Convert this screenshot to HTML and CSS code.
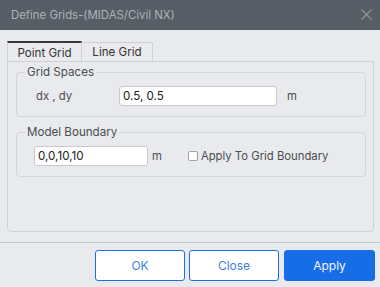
FILE: index.html
```html
<!DOCTYPE html>
<html lang="en">

<head>
    <meta charset="UTF-8">
    <title>Define Grids</title>
    <link rel="stylesheet" href="styles.css">
</head>

<body>
    <div class="dialog">
        <div class="titlebar">
            <span class="title">Define Grids-(MIDAS/Civil NX)</span>
            <svg class="close" width="11" height="11" viewBox="0 0 11 11">
                <path d="M0.5 0.5 L10.5 10.5 M10.5 0.5 L0.5 10.5" stroke="#8d9298" stroke-width="1.2" fill="none" />
            </svg>
        </div>

        <div class="content">
            <div class="tabs">
                <div class="tab active">Point Grid</div>
                <div class="tab">Line Grid</div>
            </div>

            <div class="panel">
                <fieldset class="group">
                    <legend>Grid Spaces</legend>
                    <div class="row row-spaces">
                        <span class="label">dx , dy</span>
                        <input class="field field-wide" type="text" value="0.5, 0.5">
                        <span class="unit">m</span>
                    </div>
                </fieldset>

                <fieldset class="group">
                    <legend>Model Boundary</legend>
                    <div class="row row-boundary">
                        <input class="field field-short" type="text" value="0,0,10,10">
                        <span class="unit unit-near">m</span>
                        <label class="check">
                            <span class="box"></span>
                            <span>Apply To Grid Boundary</span>
                        </label>
                    </div>
                </fieldset>
            </div>
        </div>

        <div class="footer">
            <button class="btn btn-outline">OK</button>
            <button class="btn btn-outline">Close</button>
            <button class="btn btn-primary">Apply</button>
        </div>
    </div>
</body>

</html>
```

FILE: styles.css
```css
* {
    box-sizing: border-box;
}

body {
    margin: 0;
    background-color: #e9eaed;
    font-family: Inter, "Noto Sans", sans-serif;
    font-size: 11.3px;
    color: #4a4d52;
}

.dialog {
    width: 380px;
    height: 287px;
    display: flex;
    flex-direction: column;
}

.titlebar {
    height: 30px;
    flex: none;
    display: flex;
    align-items: center;
    justify-content: space-between;
    background-color: #575e66;
    padding: 0 8px 0 11px;
}

.title {
    color: #aeb2b7;
    font-size: 11.4px;
}

.close {
    display: block;
    margin-top: -1px;
}

.content {
    padding: 11px 6px 0 7px;
}

.tabs {
    display: flex;
    height: 20px;
}

.tab {
    height: 20px;
    padding: 0;
    display: flex;
    align-items: center;
    justify-content: center;
    color: #333;
    font-size: 11.6px;
    border: 1px solid #cfd1d5;
    border-bottom: none;
}

.tab.active {
    width: 75px;
    border-top: 2px solid #3a3a3a;
    padding-top: 2px;
}

.tab:not(.active) {
    width: 71px;
    margin-top: 1px;
    height: 19px;
    border-left: none;
}

.panel {
    height: 171px;
    border: 1px solid #cfd1d5;
    border-radius: 0 0 4px 4px;
    padding: 3px 7px 0 8px;
}

.group {
    margin: 0 0 8px 0;
    padding: 0 0 0 8px;
    border: 1px solid #d3d5d9;
    border-radius: 4px;
}

legend {
    padding: 0 2px;
    line-height: 15px;
    color: #4a4d52;
    font-size: 11.6px;
}

.row {
    display: flex;
    align-items: center;
}

.row-spaces {
    padding: 6px 0 10px 11px;
}

.row-boundary {
    padding: 6px 0 10px 9px;
}

.label {
    width: 83px;
    color: #4a4d52;
}

.field {
    height: 20px;
    border: 1px solid #c6c8cc;
    border-radius: 3px;
    background-color: #fff;
    font-family: Inter, "Noto Sans", sans-serif;
    font-size: 11.6px;
    color: #222;
    padding: 0 3px;
    outline: none;
}

.field-wide {
    width: 158px;
}

.field-short {
    width: 114px;
}

.unit {
    margin-left: 10px;
    color: #4a4d52;
}

.unit-near {
    margin-left: 4px;
}

.check {
    display: flex;
    align-items: center;
    gap: 3px;
    margin-left: 26px;
    color: #4a4d52;
}

.box {
    width: 10px;
    height: 10px;
    border: 1px solid #9ea2a8;
    border-radius: 2px;
    background-color: #fff;
}

.footer {
    margin-top: 10px;
    border-top: 1px solid #c4c7cb;
    padding: 7px 5px 0 0;
    display: flex;
    justify-content: flex-end;
    gap: 4px;
}

.btn {
    width: 90px;
    height: 31px;
    border-radius: 3px;
    font-family: Inter, "Noto Sans", sans-serif;
    font-size: 12px;
    cursor: pointer;
}

.btn-outline {
    background-color: #fff;
    border: 1px solid #1b6ee8;
    color: #3d7fe6;
}

.btn-primary {
    width: 91px;
    margin-left: 1px;
    background-color: #176ce8;
    border: 1px solid #176ce8;
    color: #f2f6ff;
}
```
